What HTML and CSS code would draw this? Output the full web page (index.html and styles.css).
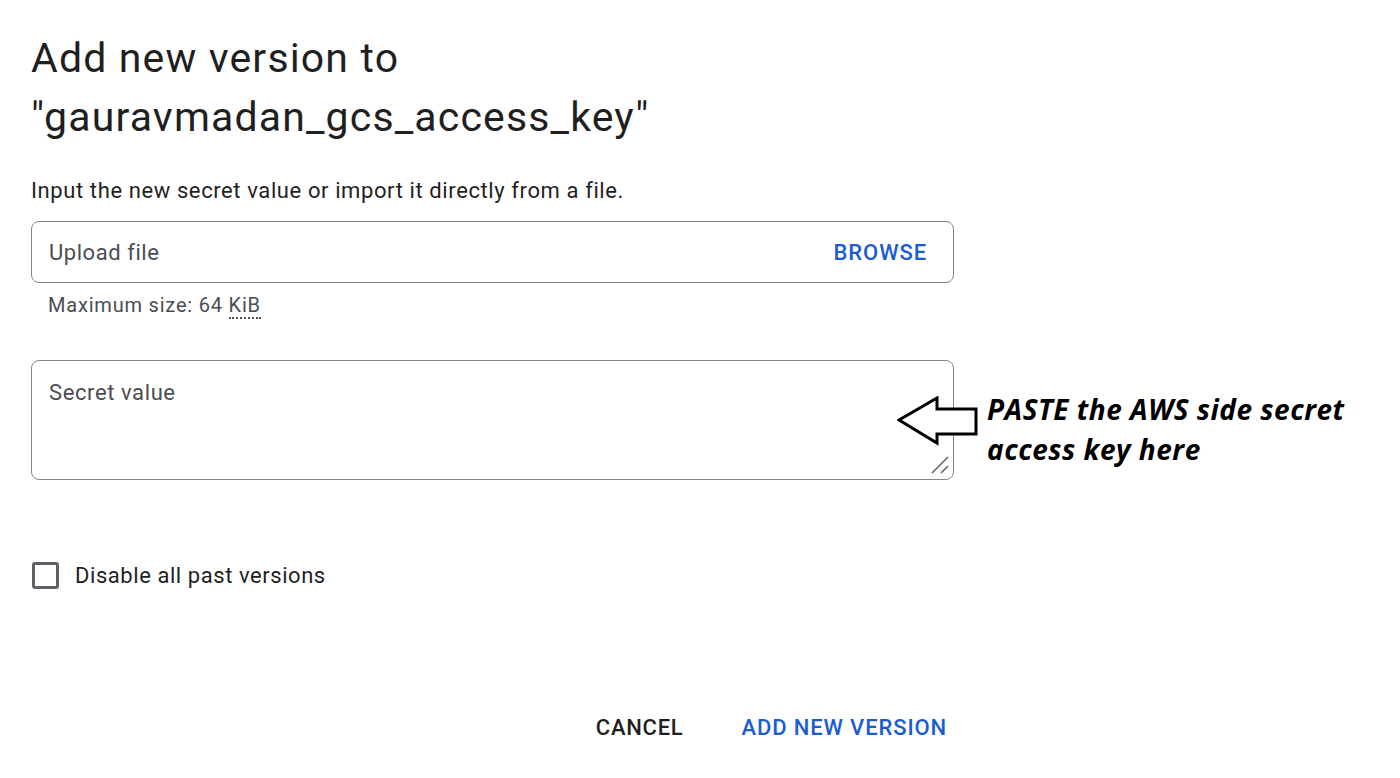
FILE: index.html
```html
<!DOCTYPE html>
<html lang="en">
<head>
<meta charset="utf-8">
<title>Add new version</title>
<link rel="stylesheet" href="styles.css">
</head>
<body>
<div class="dialog">
  <h1 class="title">Add new version to<br>"gauravmadan_gcs_access_key"</h1>
  <p class="intro">Input the new secret value or import it directly from a file.</p>

  <div class="upload">
    <span class="upload-label">Upload file</span>
    <span class="browse">BROWSE</span>
  </div>
  <div class="hint">Maximum size: 64 <abbr class="unit" title="kibibyte">KiB</abbr></div>

  <div class="secret">
    <textarea class="secret-input" placeholder="Secret value"></textarea>
    <svg class="grip" width="20" height="20" viewBox="0 0 20 20" aria-hidden="true">
      <line x1="2" y1="18" x2="18" y2="2" stroke="#5f6368" stroke-width="1.6"/>
      <line x1="11" y1="18" x2="18" y2="11" stroke="#5f6368" stroke-width="1.6"/>
    </svg>
  </div>

  <label class="check-row">
    <span class="checkbox"></span>
    <span class="check-label">Disable all past versions</span>
  </label>

  <div class="actions">
    <span class="btn btn-cancel">CANCEL</span>
    <span class="btn btn-primary">ADD NEW VERSION</span>
  </div>
</div>

<div class="note">
  <svg class="note-arrow" width="82" height="50" viewBox="0 0 82 50" aria-hidden="true">
    <polygon points="2,24 40,2 40,13 79,13 79,38 40,38 40,47" fill="#fff" stroke="#000" stroke-width="3" stroke-linejoin="miter"/>
  </svg>
  <div class="note-text">PASTE the AWS side secret<br>access key here</div>
</div>
</body>
</html>
```

FILE: styles.css
```css
html, body {
  margin: 0;
  padding: 0;
  background: #ffffff;
}

body {
  font-family: Roboto, "Liberation Sans", Arial, sans-serif;
  color: #1f1f1f;
  width: 1400px;
  height: 778px;
  position: relative;
  overflow: hidden;
}

.dialog {
  width: 923px;
  margin-left: 31px;
  display: flex;
  flex-direction: column;
}

.title {
  margin: 29px 0 0 0;
  font-size: 41px;
  line-height: 59px;
  font-weight: 400;
  color: #1f1f1f;
  letter-spacing: 1.15px;
}

.intro {
  margin: 30px 0 0 0;
  font-size: 22px;
  line-height: 28px;
  color: #1f1f1f;
  letter-spacing: 0.6px;
}

.upload {
  margin-top: 16px;
  box-sizing: border-box;
  height: 62px;
  border: 1px solid #80868b;
  border-radius: 8px;
  display: flex;
  align-items: center;
  justify-content: space-between;
  padding: 0 26px 0 17px;
}

.upload-label {
  font-size: 22px;
  color: #4a4d52;
  letter-spacing: 0.55px;
}

.browse {
  font-size: 22px;
  font-weight: 500;
  color: #1b5dd0;
  letter-spacing: 0.9px;
}

.hint {
  margin-top: 10px;
  padding-left: 17px;
  font-size: 20px;
  line-height: 24px;
  color: #4a4d52;
  letter-spacing: 0.8px;
}

.unit {
  text-decoration: none;
  border-bottom: 2px dotted #4a4d52;
}

.secret {
  margin-top: 43px;
  position: relative;
  height: 120px;
}

.secret-input {
  display: block;
  box-sizing: border-box;
  width: 100%;
  height: 120px;
  margin: 0;
  border: 1px solid #80868b;
  border-radius: 8px;
  padding: 18px 17px 16px;
  font-family: Roboto, "Liberation Sans", Arial, sans-serif;
  font-size: 22px;
  line-height: 28px;
  letter-spacing: 0.6px;
  color: #1f1f1f;
  resize: none;
  outline: none;
  background: #fff;
}

.secret-input::placeholder {
  color: #4a4d52;
  opacity: 1;
}

.grip {
  position: absolute;
  right: 4px;
  bottom: 5px;
}

.check-row {
  margin-top: 82px;
  display: flex;
  align-items: center;
  gap: 16px;
  height: 27px;
}

.checkbox {
  box-sizing: border-box;
  width: 27px;
  height: 27px;
  border: 3px solid #5f6368;
  border-radius: 3px;
  margin-left: 1px;
}

.check-label {
  font-size: 22px;
  color: #1f1f1f;
  letter-spacing: 0.56px;
}

.actions {
  margin-top: 119px;
  display: flex;
  justify-content: flex-end;
  align-items: center;
  gap: 43px;
}

.btn {
  font-size: 22px;
  font-weight: 500;
  line-height: 40px;
  padding: 0 7px 0 8px;
}

.btn-cancel {
  color: #1f1f1f;
  letter-spacing: 0.75px;
}

.btn-primary {
  color: #1b5dd0;
  letter-spacing: 0.87px;
}

.note {
  position: absolute;
  left: 897px;
  top: 387px;
  display: flex;
  align-items: flex-start;
}

.note-arrow {
  margin-top: 9px;
}

.note-text {
  margin-left: 8px;
  margin-top: 2px;
  font-family: "Open Sans", Lato, sans-serif;
  font-style: italic;
  font-weight: 700;
  font-size: 28px;
  line-height: 40px;
  letter-spacing: 0.5px;
  color: #000;
}
```
